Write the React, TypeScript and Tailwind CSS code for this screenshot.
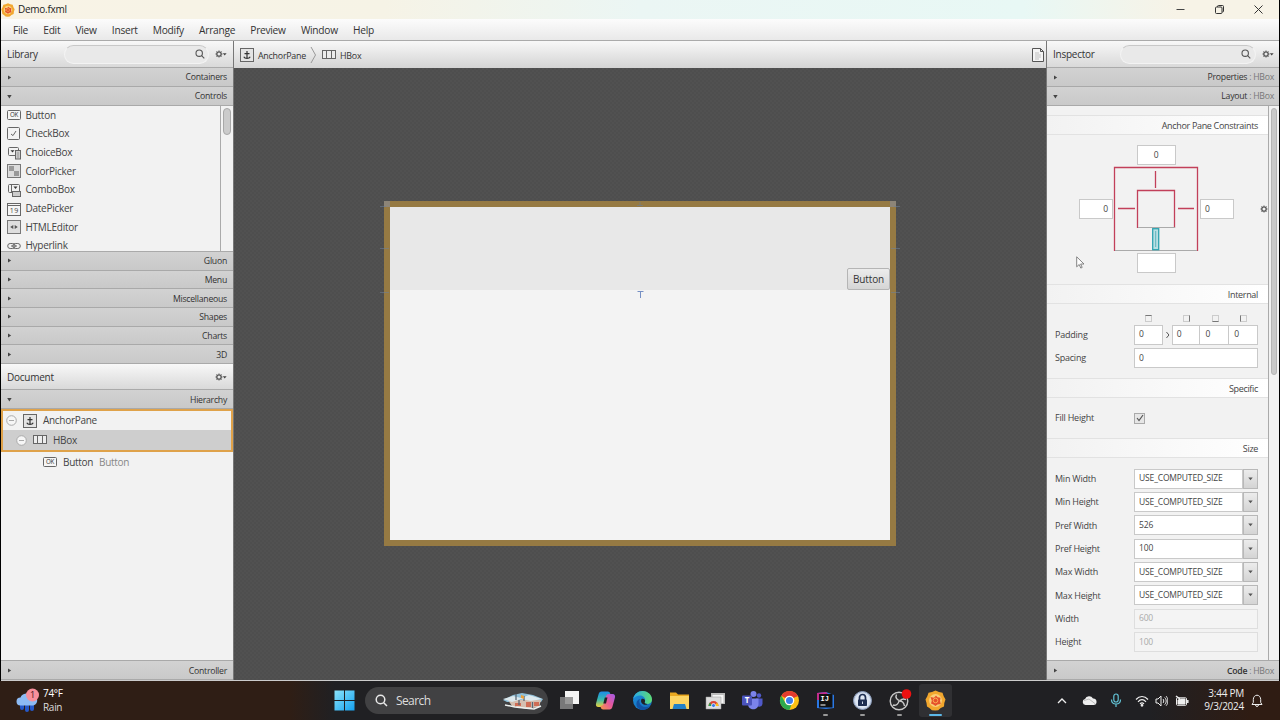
import type { ReactNode } from "react";

const items: [string, ReactNode][] = [
  ["Button", <OkIcon key="b" />],
  ["CheckBox", <svg key="c" width="13" height="13" viewBox="0 0 13 13" fill="none" stroke="#666"><rect x=".5" y=".5" width="12" height="12" rx="1" /><path d="M4 7l2 1.6L9 4" /></svg>],
  ["ChoiceBox", <svg key="h" width="14" height="14" viewBox="0 0 14 14" fill="none" stroke="#666"><rect x="1.5" y="1.5" width="10" height="8" rx="1" /><path d="M3.500 4.200h4L5.500 6.600z" fill="#333" stroke="none" /><rect x="8.500" y="4.500" width="5" height="8.500" fill="#ccc" /><path d="M10 7h2M10 9h2M10 11h2" strokeWidth=".5" /></svg>],
  ["ColorPicker", <svg key="p" width="14" height="14" viewBox="0 0 14 14" fill="none"><rect x=".5" y=".5" width="13" height="13" fill="#dcdcdc" stroke="#777" /><path d="M2 2h5v5H2zM7 7h5v5H7z" fill="#999" /></svg>],
  ["ComboBox", <svg key="o" width="14" height="14" viewBox="0 0 14 14" fill="none" stroke="#666"><rect x="1.500" y="1.500" width="11" height="8" rx="1" /><path d="M4.500 1v9" /><path d="M6.500 3.500h4l-2 2.600z" fill="#333" stroke="none" /><rect x="5.500" y="8.500" width="8" height="5" fill="#ccc" /></svg>],
  ["DatePicker", <svg key="d" width="14" height="14" viewBox="0 0 14 14"><rect x=".5" y="1.500" width="13" height="12" fill="#f6f6f6" stroke="#666" /><path d="M1 3.500h12" stroke="#666" /><text x="7.200" y="11.200" fontSize="7" textAnchor="middle" fill="#444" letterSpacing=".5">19</text></svg>],
  ["HTMLEditor", <svg key="t" width="14" height="14" viewBox="0 0 14 14"><rect x=".5" y=".5" width="13" height="13" fill="#dedede" stroke="#777" /><path d="M6.300 5v4L3.200 7zM7.700 5v4l3.100-2z" fill="#555" /></svg>],
  ["Hyperlink", <svg key="l" width="14" height="14" viewBox="0 0 14 14" fill="none" stroke="#666"><rect x=".7" y="4.500" width="7.500" height="5" rx="2.500" /><rect x="5.800" y="4.500" width="7.500" height="5" rx="2.500" /><path d="M4 7h6" /></svg>],
];

function OkIcon() {
  return (
    <svg width="14" height="14" viewBox="0 0 14 14">
      <rect x=".5" y="2.500" width="13" height="9" rx="1" fill="#f6f6f6" stroke="#666" />
      <text x="7" y="9.300" fontSize="6.200" textAnchor="middle" fill="#333" letterSpacing="-.2">OK</text>
    </svg>
  );
}

function AnchorIcon() {
  return (
    <svg width="14" height="14" viewBox="0 0 14 14" fill="none">
      <rect x=".5" y=".5" width="13" height="13" fill="#e4e4e4" stroke="#666" />
      <path d="M7 3v7.500M4.500 5.700h5M3.800 8.800c.5 1.200 1.600 1.700 3.200 1.700s2.700-.5 3.200-1.700" stroke="#333" strokeWidth="1.200" />
    </svg>
  );
}

function HBoxIcon() {
  return (
    <svg width="14" height="10" viewBox="0 0 14 10" fill="#ededed" stroke="#666">
      <rect x=".5" y=".5" width="13" height="8" />
      <path d="M4.500 1v8M9.500 1v8" />
    </svg>
  );
}

function Gear({ menu = true }: { menu?: boolean }) {
  return (
    <svg width={menu ? 12 : 8} height="8" viewBox={menu ? "0 0 12 8" : "0 0 8 8"} fill="none" className="shrink-0">
      <circle cx="4" cy="4" r="2.200" stroke="#555" strokeWidth="1.300" />
      <path d="M4 .5v1M4 6.500v1M.5 4h1M6.500 4h1M1.500 1.500l.7.7M5.800 5.800l.7.7M1.500 6.500l.7-.7M5.800 2.200l.7-.7" stroke="#555" />
      {menu && <path d="M7.800 3.200h3.800L9.700 5.400z" fill="#444" />}
    </svg>
  );
}

function Lens() {
  return (
    <svg width="10" height="10" viewBox="0 0 10 10" fill="none" stroke="#555" strokeWidth="1.100">
      <circle cx="4.200" cy="4.200" r="3.200" />
      <path d="M6.600 6.600L9.300 9.300" />
    </svg>
  );
}

function Arrow({ open }: { open?: boolean }) {
  return (
    <svg width="5" height="5" viewBox="0 0 5 5" fill="#444" className="-mt-0.5 shrink-0">
      <path d={open ? "M.2 1h4.400L2.400 4.400z" : "M1 .5v4L4.200 2.500z"} />
    </svg>
  );
}

function Bar({ label, sub, open, bold, className = "h-[18.67px] pt-[2px]" }: { label: string; sub?: string; open?: boolean; bold?: boolean; className?: string }) {
  return (
    <div className={`flex shrink-0 items-center justify-between border-b border-[#a9a9a9] bg-linear-to-b from-[#d2d2d2] to-[#c9c9c9] pl-[5.5px] text-[8.700px] tracking-[-0.250px] text-[#333] ${sub ? "pr-[5px]" : "pr-1.5"} ${className}`}>
      <Arrow open={open} />
      <span>
        <span className={bold ? "font-semibold" : ""}>{label}</span>
        {sub && <span className="text-[#777]"> : {sub}</span>}
      </span>
    </div>
  );
}

function PanelHead({ title, search, pad }: { title: string; search?: string; pad: string }) {
  return (
    <div className={`flex shrink-0 items-center border-b border-[#aaa] bg-linear-to-b from-[#f8f8f8] to-[#d9d9d9] pl-1.5 ${search ? "h-[27px]" : "h-[26px]"} ${pad}`}>
      <span className="pt-[1px] text-[10px] tracking-[-0.250px] text-[#333]">{title}</span>
      {search && (
        <div className={`ml-auto flex h-[19px] items-center justify-end rounded-full border border-[#f3f3f3] border-t-[#c8c8c8] bg-[#e9e9e9] ${search}`}>
          <Lens />
        </div>
      )}
      <div className={search ? "ml-[6px]" : "ml-auto"}>
        <Gear />
      </div>
    </div>
  );
}

function Toggle() {
  return (
    <svg width="11" height="11" viewBox="0 0 11 11" fill="#f6f6f6" stroke="#aaa">
      <circle cx="5.500" cy="5.500" r="4.800" />
      <path d="M3 5.500h5" />
    </svg>
  );
}

function LeftPanel() {
  return (
    <aside className="flex w-[233px] shrink-0 flex-col border-r border-[#777] bg-[#f2f2f2]">
      <PanelHead title="Library" search="w-[145px] pr-[3px]" pad="pr-[6px]" />
      <Bar label="Containers" className="h-[19px] pt-[2px]" />
      <Bar label="Controls" open className="h-[19px] pt-[2px]" />
      <div className="flex h-[146px] shrink-0 overflow-hidden border-b border-[#aaa]">
        <div className="flex-1">
          {items.map(([name, icon]) => (
            <div key={name} className="flex h-[18.67px] items-center gap-[5px] pl-[5.500px] text-[10px] tracking-[-0.270px] text-[#444]">
              <span className="flex w-3.5 justify-center">{icon}</span>
              {name}
            </div>
          ))}
        </div>
        <div className="flex w-[13px] justify-center border-l border-[#aaa] pt-0.5">
          <div className="h-[27px] w-2 rounded-full border border-[#a8a8a8] bg-[#cbcbcb]" />
        </div>
      </div>
      <div className="flex h-28 shrink-0 flex-col">
        {["Gluon", "Menu", "Miscellaneous", "Shapes", "Charts", "3D"].map((l) => (
          <Bar key={l} label={l} />
        ))}
      </div>
      <PanelHead title="Document" pad="pr-[6px]" />
      <Bar label="Hierarchy" open className="h-[19px] pt-[3px]" />
      <div className="flex-1 text-[10px] tracking-[-0.300px] text-[#444]">
        <div className="h-[43px] border-2 border-[#dfa24a]">
          <div className="flex h-[19px] items-center pl-[3px]">
            <Toggle />
            <span className="mr-[6px] ml-[6px]"><AnchorIcon /></span>
            AnchorPane
          </div>
          <div className="flex h-5 items-center bg-[#cecece] pl-[13px]">
            <Toggle />
            <span className="mr-[6px] ml-[6px]"><HBoxIcon /></span>
            HBox
          </div>
        </div>
        <div className="flex h-5 items-center pl-[42px]">
          <OkIcon />
          <span className="ml-[6px]">Button</span>
          <span className="ml-1.5 text-[#888]">Button</span>
        </div>
      </div>
      <Bar label="Controller" className="h-[20px] border-t pt-[3px]" />
    </aside>
  );
}

function Canvas() {
  return (
    <main className="flex min-w-0 flex-1 flex-col">
      <div className="flex h-[27px] shrink-0 items-center bg-linear-to-b from-[#f8f8f8] to-[#d4d4d4] pr-[2px] pl-1.5 text-[8.900px] tracking-[-0.240px] text-[#333]">
        <AnchorIcon />
        <span className="ml-1 pt-[3px]">AnchorPane</span>
        <svg width="7" height="18" viewBox="0 0 7 18" fill="none" stroke="#999" className="mx-1"><path d="M1 1l4.500 8L1 17" /></svg>
        <span className="ml-[1px]"><HBoxIcon /></span>
        <span className="ml-1 pt-[3px]">HBox</span>
        <svg width="12" height="14" viewBox="0 0 12 14" fill="#f4f4f4" stroke="#555" className="ml-auto">
          <path d="M.5.500h8l3 3v10H.500zM8.500.500v3h3" />
          <path d="M3 5h4M3 7h6M3 9h6M3 11h4" stroke="#aaa" strokeWidth=".7" />
        </svg>
      </div>
      <div className="flex-1 bg-[#4f4f4f] bg-[repeating-conic-gradient(#4e4e4e_0_25%,#515151_0_50%)] bg-size-[4px_4px] pt-[133px] pl-[150px]">
        <div className="relative h-[345px] w-[512px] border-6 border-[#967a43] bg-[#f3f3f3]">
          <div className="flex h-[83px] items-end justify-end bg-[#e8e8e8]">
            <div className="flex h-[22px] w-[43px] items-center justify-center rounded-[2px] border border-[#b5b5b5] bg-linear-to-b from-[#ececec] to-[#d5d5d5] text-[10px] tracking-[-0.120px] text-[#333]">Button</div>
          </div>
          <svg width="520" height="100" viewBox="0 0 520 100" fill="none" className="absolute -top-2.5 -left-2.5">
            <path d="M4 4h6v6H4zM510 4h6v6h-6z" fill="#8d8578" />
            <g stroke="#6d7f99" strokeWidth=".8" opacity=".7">
              <path d="M0 9.500h6M514 9.500h6M0 51.500h9M511 51.500h9M0 95.500h9M511 95.500h9M257 8.500h6M260 5v4" />
            </g>
          </svg>
          <svg width="7" height="9" viewBox="0 0 7 9" stroke="#7690c4" className="absolute top-[83px] left-[247px]"><path d="M.500 1.500h6M3.500 1.500V8" /></svg>
        </div>
      </div>
    </main>
  );
}

function Section({ title }: { title: string }) {
  return (
    <div className="flex h-5 shrink-0 items-center justify-end border-y border-[#e2e2e2] bg-linear-to-r from-[#f2f2f2] to-white pt-[1px] pr-2.5 text-[9px] tracking-[-0.330px] text-[#444]">{title}</div>
  );
}

function Field({ value, className }: { value?: string; className: string }) {
  return <div className={`flex h-5 items-center border border-[#c9c9c9] bg-white text-[8.500px] tracking-[-0.150px] text-[#444] ${className}`}>{value}</div>;
}

const sizes = [
  ["Min Width", "USE_COMPUTED_SIZE"],
  ["Min Height", "USE_COMPUTED_SIZE"],
  ["Pref Width", "526"],
  ["Pref Height", "100"],
  ["Max Width", "USE_COMPUTED_SIZE"],
  ["Max Height", "USE_COMPUTED_SIZE"],
];

function Row({ label, children, className = "h-[23.330px]" }: { label: string; children: ReactNode; className?: string }) {
  return (
    <div className={`flex items-center pr-2.5 pl-2 text-[9px] tracking-[-0.220px] text-[#444] ${className}`}>
      <span className="w-[79px] shrink-0">{label}</span>
      {children}
    </div>
  );
}

function Inspector() {
  return (
    <aside className="flex w-[233px] shrink-0 flex-col border-l border-[#777] bg-[#f2f2f2]">
      <PanelHead title="Inspector" search="w-[136px] pr-[4px]" pad="pr-[5px]" />
      <Bar label="Properties" sub="HBox" className="h-[19px] pt-[2px]" />
      <Bar label="Layout" sub="HBox" open className="h-[19px] pt-[2px]" />
      <div className="flex min-h-0 flex-1">
        <div className="flex w-[222px] shrink-0 flex-col border-r border-[#aaa] pt-[9px]">
          <Section title="Anchor Pane Constraints" />
          <div className="flex h-[149px] shrink-0 flex-col items-center pt-[10px]">
            <Field value="0" className="ml-[-3px] w-[39px] justify-center" />
            <div className="mt-[1px] flex w-full items-center pl-8">
              <Field value="0" className="w-[34px] justify-end pr-[4px]" />
              <svg width="86" height="86" viewBox="0 0 86 86" fill="none" stroke="#c2405a" strokeWidth="1.300" className="mr-[1px]">
                <path d="M1.500 85V1.500h83V85" />
                <path d="M24.500 62V24.500h37V62" />
                <path d="M2 84.500h82M25 61.500h37" stroke="#aaa" strokeWidth="1" />
                <path d="M42.500 5v17M5 42.500h17M65 42.500h16" />
                <rect x="39.700" y="62.700" width="6" height="21" fill="#b9e0e4" stroke="#2fa3b0" />
                <path d="M42.700 65v16" stroke="#5fb3bd" strokeWidth="1" />
              </svg>
              <Field value="0" className="w-[34px] pl-[4px]" />
              <span className="ml-auto"><Gear menu={false} /></span>
            </div>
            <Field className="mt-[1px] ml-[-3px] w-[39px]" />
          </div>
          <Section title="Internal" />
          <div className="flex h-[74px] shrink-0 flex-col pt-[10px]">
            <div className="flex h-[9px] items-center pl-[98px]">
              <i className="mr-[31px] h-[7px] w-[7px] border border-[#ccc] border-t-[#777]" />
              <i className="mr-[22px] h-[7px] w-[7px] border border-[#ccc] border-r-[#777]" />
              <i className="mr-[21px] h-[7px] w-[7px] border border-[#ccc] border-b-[#777]" />
              <i className="h-[7px] w-[7px] border border-[#ccc] border-l-[#777]" />
            </div>
            <Row label="Padding">
              <Field value="0" className="w-[29px] pl-[4px]" />
              <svg width="9" height="8" viewBox="0 0 9 8" fill="none" stroke="#555"><path d="M3.500 1l2.500 3-2.500 3" /></svg>
              <Field value="0" className="w-[29px] pl-[4px]" />
              <Field value="0" className="w-[29px] border-l-0 pl-[5px]" />
              <Field value="0" className="w-[29px] border-l-0 pl-[5px]" />
            </Row>
            <Row label="Spacing">
              <Field value="0" className="w-[125px] pl-1" />
            </Row>
          </div>
          <Section title="Specific" />
          <Row label="Fill Height" className="h-[40px] shrink-0">
            <div className="flex h-[11px] w-[11px] items-center justify-center border border-[#aaa] bg-[#e6e6e6]">
              <svg width="8" height="8" viewBox="0 0 8 8" fill="none" stroke="#555" strokeWidth="1.200"><path d="M1 4l2 2.500L7 1" /></svg>
            </div>
          </Row>
          <Section title="Size" />
          <div className="pt-[9px]">
            {sizes.map(([l, v]) => (
              <Row key={l} label={l}>
                <Field value={v} className="w-[110px] pl-1" />
                <div className="flex h-5 w-[15px] items-center justify-center border border-[#b8b8b8] bg-linear-to-b from-[#ececec] to-[#d4d4d4]">
                  <svg width="5" height="4" viewBox="0 0 5 4" fill="#555"><path d="M.300.500h4.400L2.500 3.300z" /></svg>
                </div>
              </Row>
            ))}
            {[["Width", "600"], ["Height", "100"]].map(([l, v]) => (
              <Row key={l} label={l}>
                <div className="flex h-5 w-[125px] items-center border border-[#dedede] bg-[#f4f4f4] pl-1 text-[8.500px] text-[#aaa]">{v}</div>
              </Row>
            ))}
          </div>
        </div>
        <div className="flex-1 pt-[2px] pl-[2px]">
          <div className="h-[267px] w-[6px] rounded-full border border-[#b5b5b5] bg-[#c9c9c9]" />
        </div>
      </div>
      <Bar label="Code" sub="HBox" bold className="h-[20px] border-t pt-[3px]" />
    </aside>
  );
}

const apps: { name: string; running?: boolean; icon: ReactNode }[] = [
  { name: "tasks", icon: <><path d="M6 1h14v13H6z" fill="#f4f4f4" /><path d="M1 7h13v12H1z" fill="#888" opacity=".85" /></> },
  { name: "copilot", icon: <>
    <path d="M6.500 1.500h6.300c1.400 0 2 .7 2.400 2l.5 1.700c-2 0-3 .5-3.600 2.500L10 14.500c-.5 1.700-1.300 2.500-3 2.500H3.500c-2.300 0-3-1.800-2.400-3.800L3.500 4.500c.5-1.900 1.400-3 3-3z" fill="url(#cpA)" />
    <path d="M14.500 19.500H8.200c-1.400 0-2-.7-2.400-2l-.5-1.700c2 0 3-.5 3.600-2.500L11 6.500C11.500 4.800 12.300 4 14 4h3.500c2.300 0 3 1.800 2.400 3.800l-2.400 8.700c-.5 1.900-1.400 3-3 3z" fill="url(#cpB)" />
    <path d="M9.800 7.500h2.700l-1.500 6H8.300z" fill="#202023" /></> },
  { name: "edge", icon: <>
    <circle cx="10.500" cy="10.500" r="9.500" fill="url(#edA)" />
    <path d="M1.200 9C2 4 6 1 10.500 1c6 0 9.500 4.500 9.500 8.500 0 3-2.500 4.500-4.500 4.500-2.500 0-3.500-1-2.500-2.500C14 8 11 5.500 8 5.500c-3 0-5.500 1.500-6.800 3.500z" fill="url(#edB)" />
    <path d="M8 9c-2 3 .500 7.500 5 8 2 .200 3.500-.300 5-1-2 3-5 4.200-8 4-4-.500-6-4-5.500-7C4.800 11 6 9.500 8 9z" fill="#1253a4" />
    <path d="M9.500 9c2-.700 4 .500 3.500 2.500-1 1.500 0 2.500 2.500 2.500-3 2.500-8-1-6-5z" fill="#202023" /></> },
  { name: "files", icon: <><path d="M1 2.500h6l2 2h11V18H1z" fill="#e9a820" /><path d="M1 6h19v13H1z" fill="#fcd462" /><path d="M5 14h11l1.500 5h-14z" fill="#2180c8" /></> },
  { name: "remote", icon: <>
    <path d="M6 3h14v11H6z" fill="#bbb" /><path d="M7.500 5h11v8h-11z" fill="#f5f5f5" /><path d="M1 7h15v12H1z" fill="#ddd" stroke="#999" strokeWidth=".500" />
    <path d="M3.500 16a5 5 0 0 1 10 0z" fill="#dd4437" /><path d="M3.500 16a5 5 0 0 1 1.500-3.600L7 16z" fill="#2c9c4b" /><path d="M13.500 16a5 5 0 0 0-1.500-3.600L10 16z" fill="#fbc116" /><circle cx="8.500" cy="15.500" r="2" fill="#3c7eea" stroke="#fff" strokeWidth=".7" /></> },
  { name: "teams", icon: <>
    <circle cx="17" cy="5.500" r="2.200" fill="#5059c9" /><circle cx="11.500" cy="4" r="3" fill="#7b83eb" /><path d="M14 8.500h6.500V14a3.500 3.500 0 0 1-6.500 1z" fill="#5059c9" /><path d="M6 8.500h10.500V14c0 7-10.500 7-10.500 0z" fill="#7b83eb" /><rect y="5.500" width="10" height="10" rx="1" fill="#4b53bc" />
    <text x="5" y="13.200" fontSize="8" fontWeight="700" textAnchor="middle" fill="#fff">T</text></> },
  { name: "chrome", icon: <>
    <circle cx="10.500" cy="10.500" r="9.500" fill="#fbc116" />
    <path d="M10.500 10.500L2.300 5.700A9.500 9.500 0 0 1 18.700 5.700z" fill="#e33b2e" /><path d="M10.500 5.700h8.200" stroke="#e33b2e" strokeWidth="1.500" /><path d="M10.500 20A9.500 9.500 0 0 1 2.300 5.700l5 8.500 5 .500z" fill="#2da94f" />
    <circle cx="10.500" cy="10.500" r="4.800" fill="#fff" /><circle cx="10.500" cy="10.500" r="3.500" fill="#3c7eea" /></> },
  { name: "idea", running: true, icon: <>
    <path d="M2 3l9-1 8 3v13l-8 1-9-1z" fill="#2a78e4" /><path d="M2 3l9-1 3 3-9 5H2z" fill="#c42c8d" /><path d="M4 4h13.500v13.500H4z" fill="#111" />
    <text x="5.500" y="11" fontSize="7" fontWeight="700" fontFamily="Liberation Mono" fill="#fff">IJ</text><path d="M5.500 15h5" stroke="#fff" /></> },
  { name: "vault", running: true, icon: <>
    <circle cx="10.500" cy="10.500" r="9" fill="#c9d5e8" stroke="#8b9cba" /><circle cx="10.500" cy="10.500" r="7.300" fill="#dfe7f3" />
    <rect x="6" y="9.500" width="9" height="6.500" rx=".7" fill="#1d2d50" /><path d="M7.500 10V7.500a3 3 0 0 1 6 0V10" fill="none" stroke="#1d2d50" strokeWidth="1.700" /><path d="M10.500 11.500v2.500" stroke="#cfd8e8" /></> },
  { name: "obs", running: true, icon: <>
    <circle cx="10" cy="11" r="8.800" fill="#2a2a2c" stroke="#c8c8c8" strokeWidth="1.400" />
    <path d="M7.500 4.500c-1.500 3 .500 5.500 3 6M17 9.500c-3-1-5.500.300-6.500 2M10 11c-.500 3-3 5-6 4M15.500 16c-.500-3-2.500-5-5-5" fill="none" stroke="#ccc" strokeWidth="1.400" />
    <circle cx="17.500" cy="4" r="4.800" fill="#ee1111" /></> },
];

function SceneLogo({ size }: { size: number }) {
  return (
    <svg width={size} height={size} viewBox="0 0 21 21">
      <path d="M10.500.500l3.500 1.500 3.500.700 1.200 3.600 1.800 3.200-1.200 3.500-.300 3.500-3.300 1.500-2.500 2.300-3 .200-3.300-.200-2.500-2.300L2 16.500 1.500 13 .500 9.500l1.800-3.200 1.200-3.600L7 2z" fill="#f2a72e" />
      <circle cx="10.500" cy="10.500" r="6.500" fill="#f9cf78" />
      <path d="M5.500 7l3.500.700L11 5.500l1.500 1.800 3 .400-.500 3 .800 3.300-3.300.500-2 1.500-2.200-1.500-2.300-1 .800-2.700z" fill="#e5502c" />
      <circle cx="10.500" cy="10.500" r="2.300" fill="none" stroke="#f8b352" strokeWidth=".9" />
    </svg>
  );
}

function Taskbar() {
  return (
    <footer className="flex h-[39px] items-center bg-[linear-gradient(90deg,#2f1e15_0,#2f1e15_290px,#202023_335px,#202023_1150px,#2f1c13_1250px)] text-white">
      <div className="flex w-[334px] items-center pl-4">
        <div className="relative h-[26px] w-[24px]">
          <svg width="24" height="26" viewBox="0 0 24 26">
            <path d="M6 20v-3M11 22v-4M16 21v-3" stroke="#2558c9" strokeWidth="4" strokeLinecap="round" />
            <path d="M4.500 17.500a4 4 0 0 1 0-8 6 6 0 0 1 10-2 5 5 0 0 1 3 10z" fill="#8dbbf4" />
            <circle cx="16.500" cy="7" r="6.500" fill="#f78f9b" />
          </svg>
          <span className="absolute top-0 left-[14px] text-[9px] leading-[14px] text-[#3b1218]">1</span>
        </div>
        <div className="-mt-[2px] ml-[3px] text-[10px] leading-[14px] tracking-[-0.300px]">
          <div className="font-medium">74°F</div>
          <div className="text-[#ddd]">Rain</div>
        </div>
      </div>
      <svg width="21" height="21" viewBox="0 0 21 21" fill="url(#win)">
        <defs>
          <linearGradient id="win" x1="0" y1="0" x2="1" y2="1"><stop stopColor="#8be4fb" /><stop offset="1" stopColor="#14a0ee" /></linearGradient>
          <linearGradient id="cpA" x1="0" y1="0" x2="0" y2="1"><stop stopColor="#1d8be8" /><stop offset=".5" stopColor="#35b8b0" /><stop offset="1" stopColor="#eed23b" /></linearGradient>
          <linearGradient id="cpB" x1="1" y1="0" x2="0" y2="1"><stop stopColor="#a05bea" /><stop offset=".5" stopColor="#e8589a" /><stop offset="1" stopColor="#f79a45" /></linearGradient>
          <linearGradient id="edA" x1="0" y1="0" x2="1" y2="1"><stop stopColor="#1a8fdc" /><stop offset="1" stopColor="#1567b5" /></linearGradient>
          <linearGradient id="edB"><stop stopColor="#2aa9e6" /><stop offset="1" stopColor="#5fdc72" /></linearGradient>
        </defs>
        <path d="M.500.500h9.500V10H.500zM11 .500h9.500V10H11zM.500 11H10v9.500H.500zM11 11h9.500v9.500H11z" />
      </svg>
      <div className="ml-[10px] flex h-[27px] w-[183px] items-center rounded-full bg-[#414143] pr-1 pl-2.5">
        <svg width="13" height="13" viewBox="0 0 13 13" fill="none" stroke="#e8e8e8" strokeWidth="1.500"><circle cx="5.500" cy="5.500" r="4.300" /><path d="M8.700 8.700L12 12" /></svg>
        <span className="ml-[8px] text-[12px] tracking-[-0.600px] text-[#ddd]">Search</span>
        <svg width="42" height="20" viewBox="0 0 42 20" className="ml-auto">
          <path d="M1 9l10-5 9-2 11 2 10 4-2 3H5z" fill="#8fbfd8" />
          <path d="M6 9h33l-2 7-12 2-15-3z" fill="#d5bfb0" />
          <path d="M1 8l10-3 8 2 8-3 13 4-11 2-10-2-9 3z" fill="#dce8ed" />
          <path d="M13 12h6v3h-6zM24 11h5v5h-5zM32 11h5v4h-5z" fill="#cf6d55" />
          <path d="M14 3v6M17 9v5M22 5v5M30.500 11v6" stroke="#596775" strokeWidth="1.300" />
          <path d="M3 14l10 2 9 1 10 1 7-3" stroke="#edf1f0" strokeWidth="1.500" fill="none" />
          <path d="M19 4l3 1v3l-3-1z" fill="#e8a03c" />
        </svg>
      </div>
      <div className="ml-[3px] flex">
        {apps.map((a) => (
          <div key={a.name} className="relative flex h-[39px] w-[36.670px] items-center justify-center">
            <svg width="21" height="21" viewBox="0 0 21 21" overflow="visible">{a.icon}</svg>
            {a.running && <span className="absolute bottom-[4px] h-[2px] w-[5px] rounded-full bg-[#999]" />}
          </div>
        ))}
        <div className="relative flex h-[39px] w-[36.670px] items-center justify-center">
          <div className="flex h-[33px] w-[33px] items-center justify-center rounded-[3px] bg-[#303033]"><SceneLogo size={21} /></div>
          <span className="absolute bottom-[4px] h-[2px] w-[13px] rounded-full bg-[#5cb8e8]" />
        </div>
      </div>
      <div className="ml-auto flex items-center pr-[17px]">
        <svg width="10" height="8" viewBox="0 0 10 8" fill="none" stroke="#eee" strokeWidth="1.300"><path d="M1 6l4-4 4 4" /></svg>
        <svg width="15" height="11" viewBox="0 0 15 11" className="ml-[15px]"><path d="M3.500 10a3 3 0 0 1-.500-5.900A4.500 4.500 0 0 1 11 3.500a3.300 3.300 0 0 1 1 6.500z" fill="#eee" /><path d="M2 5.500l5-1.500 6.500 5" fill="none" stroke="#bbb" /></svg>
        <svg width="12" height="15" viewBox="0 0 12 15" fill="none" stroke="#63c3d6" strokeWidth="1.200" className="ml-[13px]"><rect x="3.800" y="1" width="4.400" height="8" rx="2.200" /><path d="M1.500 6.500c0 6 9 6 9 0M6 11v3" /></svg>
        <svg width="14" height="12" viewBox="0 0 14 12" fill="none" stroke="#eee" strokeWidth="1.200" className="ml-[13px]"><path d="M1 4.500c3.500-4 8.500-4 12 0M3 6.800c2.500-2.800 5.500-2.800 8 0M5 8.800c1.200-1.300 2.800-1.300 4 0" /><circle cx="7" cy="10.300" r=".8" fill="#eee" /></svg>
        <svg width="13" height="12" viewBox="0 0 13 12" fill="none" stroke="#eee" className="ml-[6px]"><path d="M1 4h2l3-3v10L3 8H1zM8 4c1 1 1 3 0 4M9.700 2.500c2 2 2 5 0 7M11.200 1.200c2.200 3 2.200 6.500 0 9.500" /></svg>
        <svg width="14" height="12" viewBox="0 0 14 12" fill="none" stroke="#eee" className="ml-[7px]"><rect x="1.500" y="2.800" width="10" height="7.500" rx="1" /><path d="M3 9V5l3-1h4v5z" fill="#eee" /><path d="M12.800 5v3M1 1l4 3" strokeWidth="1.500" /></svg>
        <div className="-mt-[2px] ml-[12px] w-[43px] text-right text-[10px] leading-[13px] tracking-[-0.250px] whitespace-nowrap text-[#eee]">
          <div>3:44 PM</div>
          <div>9/3/2024</div>
        </div>
        <svg width="12" height="14" viewBox="0 0 12 14" fill="none" stroke="#eee" className="ml-[7px]"><path d="M1 10.500l1.300-2V5.500C2.300 3 4 1.200 6 1.200S9.700 3 9.700 5.500v3l1.300 2zM4.500 11c.300 2 2.700 2 3 0" /></svg>
      </div>
    </footer>
  );
}

export default function App() {
  return (
    <div className="relative flex h-[720px] w-[1280px] flex-col overflow-hidden bg-black font-['Open_Sans','Noto_Sans',sans-serif]">
      <div className="mx-[1px] flex h-[19px] shrink-0 items-center bg-[linear-gradient(90deg,#f8f3e6_0,#f6f3e6_30%,#ebf6f4_50%,#e8f8f5_80%,#f7f3e7_92%)] pr-[16px]">
        <SceneLogo size={14} />
        <span className="ml-[3px] text-[10px] tracking-[-0.260px] text-[#222]">Demo.fxml</span>
        <svg width="9" height="9" viewBox="0 0 9 9" fill="none" stroke="#444" className="ml-auto"><path d="M.500 4.500h8" /></svg>
        <svg width="9" height="9" viewBox="0 0 9 9" fill="none" stroke="#333" className="ml-[30px]"><rect x=".500" y="2" width="6.500" height="6.500" rx="1" /><path d="M2.500 2V1.500a1 1 0 0 1 1-1H7.500a1 1 0 0 1 1 1V6a1 1 0 0 1-1 1" /></svg>
        <svg width="9" height="9" viewBox="0 0 9 9" fill="none" stroke="#333" className="ml-[30px]"><path d="M.500.500l8 8M8.500.500l-8 8" /></svg>
      </div>
      <nav className="mx-[1px] flex h-[22px] shrink-0 items-center gap-[15.200px] border-b border-[#aaa] bg-linear-to-b from-[#fcfcfc] to-[#e9e9e9] pt-[2px] pl-3 text-[10.200px] tracking-[-0.270px] text-[#333]">
        {["File", "Edit", "View", "Insert", "Modify", "Arrange", "Preview", "Window", "Help"].map((m) => (
          <span key={m}>{m}</span>
        ))}
      </nav>
      <div className="mx-[1px] flex h-[640px] shrink-0 border-b border-[#ccc]">
        <LeftPanel />
        <Canvas />
        <Inspector />
      </div>
      <Taskbar />
      <svg width="9" height="13" viewBox="0 0 9 13" fill="#fff" stroke="#777" strokeWidth=".9" className="absolute top-[256px] left-[1076px]"><path d="M.700.800v10L3.200 8.500l1.600 3.600 1.400-.700L4.600 8H8z" /></svg>
    </div>
  );
}
